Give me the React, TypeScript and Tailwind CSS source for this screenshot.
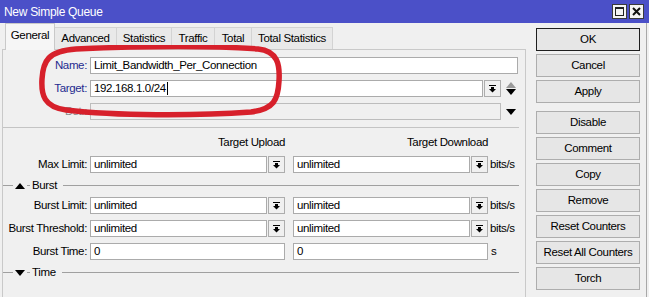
import React from "react";

const FONT = "font-['Liberation_Sans',Arial,sans-serif]";

function DropIcon() {
  return (
    <svg width="7" height="8" viewBox="0 0 7 8" className="block">
      <rect x="0" y="0" width="7" height="1" fill="#000" />
      <rect x="2" y="2" width="3" height="2" fill="#000" />
      <polygon points="0,4 7,4 3.5,7.5" fill="#000" />
    </svg>
  );
}

function DropButton() {
  return (
    <div className="ml-[1px] flex h-[17px] w-[17px] items-center justify-center border border-[#adadad] bg-[#f0f0f0]">
      <DropIcon />
    </div>
  );
}

function Input({
  width,
  value,
  disabled,
  caret,
}: {
  width: string;
  value?: string;
  disabled?: boolean;
  caret?: boolean;
}) {
  return (
    <div
      className={`${width} flex h-[17px] items-center whitespace-nowrap border pl-[3px] leading-none ${
        disabled ? "border-[#bdbdbd] bg-[#f0f0f0]" : "border-[#ababab] bg-white"
      }`}
    >
      <span>{value}</span>
      {caret ? <span className="ml-px h-[13px] w-px bg-black" /> : null}
    </div>
  );
}

function Label({ text, tone = "black" }: { text: string; tone?: "black" | "blue" | "gray" }) {
  const color =
    tone === "blue" ? "text-[#1f2b8f]" : tone === "gray" ? "text-[#8a8a8a]" : "text-black";
  return <div className={`w-[84px] shrink-0 whitespace-nowrap text-right ${color}`}>{text}</div>;
}

function Section({ title, open }: { title: string; open: boolean }) {
  return (
    <div className="flex h-[13px] items-center">
      <span className="h-px w-[10px] bg-[#a0a0a0]" />
      <svg width="10" height="6" viewBox="0 0 10 6" className="ml-[2px] block">
        {open ? (
          <polygon points="0,0 10,0 5,6" fill="#000" />
        ) : (
          <polygon points="0,6 10,6 5,0" fill="#000" />
        )}
      </svg>
      <span className="ml-[2px] h-px w-[3px] bg-[#a0a0a0]" />
      <span className="ml-[2px] leading-none">{title}</span>
      <span className="ml-[6px] h-px flex-1 bg-[#a0a0a0]" />
    </div>
  );
}

function RateRow({ label, unit = "bits/s" }: { label: string; unit?: string }) {
  return (
    <div className="flex h-[17px] items-center">
      <Label text={label} />
      <div className="ml-[3px] flex items-center">
        <Input width="w-[177px]" value="unlimited" />
        <DropButton />
      </div>
      <div className="ml-[8px] flex items-center">
        <Input width="w-[177px]" value="unlimited" />
        <DropButton />
      </div>
      <span className="ml-[2px]">{unit}</span>
    </div>
  );
}

const tabs = [
  { name: "General", w: "w-[50px]" },
  { name: "Advanced", w: "w-[63px]" },
  { name: "Statistics", w: "w-[56px]" },
  { name: "Traffic", w: "w-[44px]" },
  { name: "Total", w: "w-[38px]" },
  { name: "Total Statistics", w: "w-[82px]" },
];

const buttons = [
  "OK",
  "Cancel",
  "Apply",
  "Disable",
  "Comment",
  "Copy",
  "Remove",
  "Reset Counters",
  "Reset All Counters",
  "Torch",
];

export default function App() {
  return (
    <div
      className={`${FONT} relative h-[297px] w-[649px] overflow-hidden bg-[#f0f0f0] text-[11.5px] tracking-[-0.35px] text-black`}
    >
      {/* title bar */}
      <div className="flex h-[23px] items-center justify-between bg-[#4b50c8] pl-[4px] pr-[5px]">
        <span className="text-[12px] tracking-[-0.3px] text-white">New Simple Queue</span>
        <div className="flex gap-[2px]">
          <div className="flex h-[15px] w-[15px] items-center justify-center border border-[#3a3a3a] bg-[#f4f4f4]">
            <span className="h-[9px] w-[9px] border border-[#222] border-t-2" />
          </div>
          <div className="flex h-[15px] w-[15px] items-center justify-center border border-[#3a3a3a] bg-[#f4f4f4]">
            <svg width="9" height="9" viewBox="0 0 9 9" className="block">
              <path d="M1 1 L8 8 M8 1 L1 8" stroke="#111" strokeWidth="2" />
            </svg>
          </div>
        </div>
      </div>

      <div className="flex">
        {/* left: tabs and panel */}
        <div className="ml-[2px] w-[524px]">
          <div className="flex h-[26px] items-end pl-[3px]">
            {tabs.map((t, i) =>
              i === 0 ? (
                <div
                  key={t.name}
                  className={`${t.w} relative z-10 -mb-px flex h-[27px] items-center justify-center border border-b-0 border-[#c9c9c9] bg-[#f6f6f6] pb-[2px]`}
                >
                  {t.name}
                </div>
              ) : (
                <div
                  key={t.name}
                  className={`${t.w} -ml-px flex h-[22px] items-center justify-center whitespace-nowrap border border-b-0 border-[#d3d3d3] bg-[#e9e9e9]`}
                >
                  {t.name}
                </div>
              ),
            )}
          </div>
          <div className="relative h-[260px] border border-[#c9c9c9] bg-[#f0f0f0] pr-[6px]">
            <div className="flex flex-col">
              <div className="mt-[7px] flex h-[17px] items-center">
                <Label text="Name:" tone="blue" />
                <div className="ml-[3px]">
                  <Input width="w-[428px]" value="Limit_Bandwidth_Per_Connection" />
                </div>
              </div>
              <div className="mt-[6px] flex h-[17px] items-center">
                <Label text="Target:" tone="blue" />
                <div className="ml-[3px] flex items-center">
                  <Input width="w-[393px]" value="192.168.1.0/24" caret />
                  <DropButton />
                </div>
                <svg width="10" height="13" viewBox="0 0 10 13" className="ml-[5px] block">
                  <polygon points="0,6 10,6 5,0" fill="#9a9a9a" />
                  <polygon points="0,7 10,7 5,13" fill="#000" />
                </svg>
              </div>
              <div className="mt-[6px] flex h-[17px] items-center">
                <Label text="Dst.:" tone="gray" />
                <div className="ml-[3px]">
                  <Input width="w-[411px]" disabled />
                </div>
                <svg width="10" height="6" viewBox="0 0 10 6" className="ml-[5px] block">
                  <polygon points="0,0 10,0 5,6" fill="#000" />
                </svg>
              </div>
              <div className="mt-[7px] h-px bg-[#c4c4c4]" />
              <div className="mt-[8px] flex h-[14px] items-center leading-none">
                <div className="ml-[87px] w-[195px] text-right">Target Upload</div>
                <div className="ml-[8px] w-[195px] text-right">Target Download</div>
              </div>
              <div className="mt-[6px]">
                <RateRow label="Max Limit:" />
              </div>
              <div className="mt-[6px]">
                <Section title="Burst" open={false} />
              </div>
              <div className="mt-[5px]">
                <RateRow label="Burst Limit:" />
              </div>
              <div className="mt-[6px]">
                <RateRow label="Burst Threshold:" />
              </div>
              <div className="mt-[6px] flex h-[17px] items-center">
                <Label text="Burst Time:" />
                <div className="ml-[3px]">
                  <Input width="w-[195px]" value="0" />
                </div>
                <div className="ml-[8px]">
                  <Input width="w-[195px]" value="0" />
                </div>
                <span className="ml-[3px]">s</span>
              </div>
              <div className="mt-[6px]">
                <Section title="Time" open />
              </div>
            </div>

            {/* hand-drawn highlight */}
            <svg
              width="250"
              height="75"
              viewBox="0 0 250 75"
              className="pointer-events-none absolute left-[33px] top-[-5px]"
            >
              <path
                d="M40 4 C 110 1, 180 1, 222 4 C 242 6, 244 20, 243 36 C 242 55, 238 64, 215 67 C 160 71, 80 71, 30 65 C 8 62, 5 50, 6 34 C 7 16, 12 6, 40 4 Z"
                fill="none"
                stroke="#d7202b"
                strokeWidth="5.5"
              />
            </svg>
          </div>
        </div>

        {/* right: buttons */}
        <div className="ml-[10px] mt-[5px] flex w-[104px] flex-col">
          {buttons.map((b, i) => (
            <div
              key={b}
              className={`flex h-[23px] items-center justify-center whitespace-nowrap border ${
                i === 0 ? "border-[#1e1e1e]" : "border-[#adadad]"
              } bg-[#e6e6e6] ${i === 0 ? "" : i === 3 ? "mt-[8px]" : "mt-[3px]"}`}
            >
              {b}
            </div>
          ))}
        </div>
        <div className="ml-[6px] h-[274px] w-px bg-[#a8a8a8]" />
      </div>
    </div>
  );
}
